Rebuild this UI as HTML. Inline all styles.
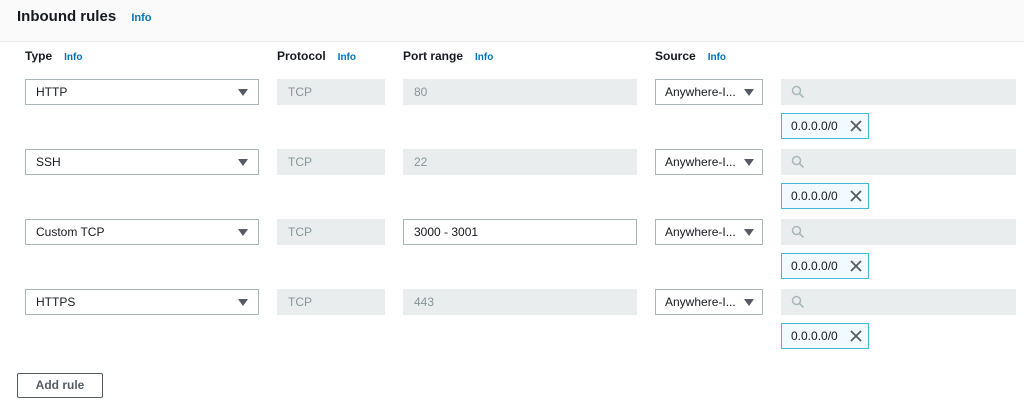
<!DOCTYPE html>
<html><head><style>
*{box-sizing:border-box;margin:0;padding:0}
body{width:1024px;height:411px;background:#fff;font-family:"Liberation Sans",sans-serif;position:relative;overflow:hidden;color:#16191f}
.hdr{position:absolute;left:0;top:0;width:1024px;height:42px;background:#fafafa;border-bottom:1px solid #eaeded}
.title{position:absolute;left:17px;top:8px;font-size:15px;font-weight:bold;color:#16191f}
.info{color:#0073bb;font-size:10px;font-weight:bold}
.lbl{position:absolute;top:49px;font-size:12px;font-weight:bold}
.lbl .info{margin-left:12px}
.box{position:absolute;height:26px;font-size:12px;line-height:24px;padding-left:10px}
.sel{border:1px solid #aab7b8;background:#fff;color:#16191f}
.dis{background:#eaeded;color:#879596;border:1px solid #eaeded}
.arr{position:absolute;right:10px;top:9px;width:0;height:0;border-left:5px solid transparent;border-right:5px solid transparent;border-top:7px solid #545b64}
.chip{position:absolute;height:26px;width:88px;border:1px solid #44b9d6;background:#f1faff;font-size:12px;line-height:24px;padding-left:9px;color:#16191f}
.btn{position:absolute;left:17px;top:373px;width:86px;height:25px;border:1px solid #545b64;font-size:12px;font-weight:bold;line-height:23px;text-align:center;color:#545b64;border-radius:2px}
</style></head><body>
<div class="hdr"><div class="title">Inbound rules <span class="info" style="margin-left:11px;font-size:11px">Info</span></div></div>
<div class="lbl" style="left:25px">Type<span class="info">Info</span></div>
<div class="lbl" style="left:277px">Protocol<span class="info">Info</span></div>
<div class="lbl" style="left:403px">Port range<span class="info">Info</span></div>
<div class="lbl" style="left:655px">Source<span class="info">Info</span></div>

<div id="rows"></div>
<script>
var rows=[["HTTP","80",0],["SSH","22",0],["Custom TCP","3000 - 3001",1],["HTTPS","443",0]];
var h="";
rows.forEach(function(r,i){var y=79+70*i;
h+='<div class="box sel" style="left:25px;top:'+y+'px;width:234px">'+r[0]+'<div class="arr"></div></div>';
h+='<div class="box dis" style="left:277px;top:'+y+'px;width:108px">TCP</div>';
h+='<div class="box '+(r[2]?'sel':'dis')+'" style="left:403px;top:'+y+'px;width:234px">'+r[1]+'</div>';
h+='<div class="box sel" style="left:655px;top:'+y+'px;width:108px;padding-left:9px">Anywhere-I...<div class="arr" style="right:8px"></div></div>';
h+='<div class="box dis" style="left:781px;top:'+y+'px;width:235px"><svg width="14" height="14" viewBox="0 0 14 14" style="position:absolute;left:9px;top:5px"><circle cx="5.5" cy="5.5" r="4" fill="none" stroke="#aab7b8" stroke-width="1.5"/><path d="M8.5 8.5L12.5 12.5" stroke="#aab7b8" stroke-width="1.6"/></svg></div>';
h+='<div class="chip" style="left:781px;top:'+(y+34)+'px">0.0.0.0/0<svg width="12" height="12" viewBox="0 0 12 12" style="position:absolute;left:68px;top:6px"><path d="M1 1L11 11M11 1L1 11" stroke="#545b64" stroke-width="1.8"/></svg></div>';
});
document.getElementById("rows").innerHTML=h;
</script>
<div class="btn">Add rule</div>
</body></html>
